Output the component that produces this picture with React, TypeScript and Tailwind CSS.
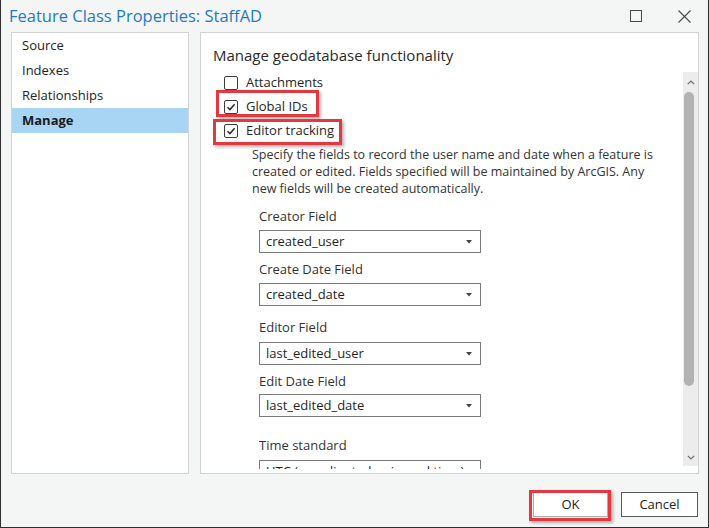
import React from "react";

function CheckBox({ checked }: { checked: boolean }) {
  return (
    <div className="w-[14px] h-[14px] border border-[#3c3c3c] rounded-[2px] bg-white flex items-center justify-center shrink-0">
      {checked && (
        <svg width="10" height="10" viewBox="0 0 10 10">
          <path d="M1.5 5.2 L4 7.6 L8.6 2.2" fill="none" stroke="#2b2b2b" strokeWidth="1.5" />
        </svg>
      )}
    </div>
  );
}

function Dropdown({ value, mt }: { value: string; mt: string }) {
  return (
    <div className={`${mt} w-[222px] h-[23px] border border-[#7a7a7a] bg-white flex items-center pl-[6px] pr-[8px] shrink-0 overflow-hidden`}>
      <span className="text-[13px] text-[#1f1f1f] leading-none whitespace-nowrap">{value}</span>
      <svg className="ml-auto shrink-0" width="6" height="4" viewBox="0 0 6 4">
        <path d="M0 0 H6 L3 3.5 Z" fill="#444" />
      </svg>
    </div>
  );
}

export default function App() {
  return (
    <div className="w-[709px] h-[528px] bg-[#f4f6f5] border-x border-b border-[#2e2e2e] flex flex-col overflow-hidden font-['Open_Sans',sans-serif] text-[#262626]">
      {/* Title bar */}
      <div className="h-[32px] flex items-center pl-[8px] pr-[17px] shrink-0">
        <span className="text-[16.5px] text-[#1f7ac4] leading-none">Feature Class Properties: StaffAD</span>
        <div className="ml-auto flex items-center gap-[36px]">
          <svg width="12" height="12" viewBox="0 0 12 12">
            <rect x="0.5" y="0.5" width="11" height="11" fill="none" stroke="#4a4a4a" strokeWidth="1" />
          </svg>
          <svg width="13" height="13" viewBox="0 0 13 13">
            <path d="M0.5 0.5 L12.5 12.5 M12.5 0.5 L0.5 12.5" fill="none" stroke="#4a4a4a" strokeWidth="1.1" />
          </svg>
        </div>
      </div>

      {/* Body */}
      <div className="flex h-[442px] pl-[10px] pr-[9px] gap-[11px] shrink-0">
        {/* Left nav */}
        <div className="w-[178px] border border-[#d2d2d2] bg-white flex flex-col text-[13px] text-[#222]">
          <div className="h-[25px] flex items-center pl-[10px]">Source</div>
          <div className="h-[25px] flex items-center pl-[10px]">Indexes</div>
          <div className="h-[25px] flex items-center pl-[10px]">Relationships</div>
          <div className="h-[25px] flex items-center pl-[10px] bg-[#a8d5f3] font-bold text-[#1a1a1a]">Manage</div>
        </div>

        {/* Right panel */}
        <div className="flex-1 border border-[#d2d2d2] bg-white flex flex-col min-w-0">
          <div className="pl-[12px] pt-[12px] h-[31px] text-[15px] leading-[20px] text-[#2a2a2a] shrink-0 whitespace-nowrap">
            Manage geodatabase functionality
          </div>
          <div className="flex flex-1 min-h-0">
            <div className="flex-1 min-w-0 overflow-hidden mb-[4px] pl-[23px] pt-[7px] flex flex-col">
              <div className="h-[24px] flex items-center gap-[8px] text-[13px] shrink-0">
                <CheckBox checked={false} />
                <span>Attachments</span>
              </div>
              <div className="h-[24px] flex items-center shrink-0">
                <div className="relative h-[24px] flex items-center gap-[8px] text-[13px]">
                  <CheckBox checked />
                  <span>Global IDs</span>
                  <span className="absolute left-[-8px] top-[-5px] w-[103px] h-[27px] border-[3px] border-[#e5383e] shadow-[2px_2px_3px_rgba(0,0,0,0.3)]"></span>
                </div>
              </div>
              <div className="h-[24px] flex items-center shrink-0">
                <div className="relative h-[24px] flex items-center gap-[8px] text-[13px]">
                  <CheckBox checked />
                  <span>Editor tracking</span>
                  <span className="absolute left-[-11px] top-[0px] w-[129px] h-[26px] border-[3px] border-[#e5383e] shadow-[2px_2px_3px_rgba(0,0,0,0.3)]"></span>
                </div>
              </div>
              <p className="mt-[3px] ml-[28px] w-[402px] text-[12.5px] leading-[17px] text-[#333] shrink-0">
                Specify the fields to record the user name and date when a feature is created or edited. Fields specified will be maintained by ArcGIS. Any new fields will be created automatically.
              </p>
              <div className="ml-[35px] flex flex-col">
                <div className="mt-[9px] h-[20px] leading-[20px] text-[13px] text-[#333]">Creator Field</div>
                <Dropdown value="created_user" mt="mt-[4px]" />
                <div className="mt-[6px] h-[20px] leading-[20px] text-[13px] text-[#333]">Create Date Field</div>
                <Dropdown value="created_date" mt="mt-[4px]" />
                <div className="mt-[11px] h-[20px] leading-[20px] text-[13px] text-[#333]">Editor Field</div>
                <Dropdown value="last_edited_user" mt="mt-[5px]" />
                <div className="mt-[6px] h-[20px] leading-[20px] text-[13px] text-[#333]">Edit Date Field</div>
                <Dropdown value="last_edited_date" mt="mt-[3px]" />
                <div className="mt-[18px] h-[20px] leading-[20px] text-[13px] text-[#333]">Time standard</div>
                <Dropdown value="UTC (coordinated universal time)" mt="mt-[5px]" />
              </div>
            </div>
            {/* Scrollbar */}
            <div className="w-[15px] mt-[8px] mb-[7px] bg-[#ececec] flex flex-col shrink-0">
              <div className="h-[20px] flex items-center justify-center">
                <svg width="8" height="5" viewBox="0 0 8 5">
                  <path d="M0.8 4.2 L4 1 L7.2 4.2" fill="none" stroke="#6a6a6a" strokeWidth="1.2" />
                </svg>
              </div>
              <div className="ml-[1px] w-[10px] h-[294px] rounded-full bg-[#b2b2b2]"></div>
              <div className="flex-1"></div>
              <div className="h-[18px] flex items-center justify-center">
                <svg width="8" height="5" viewBox="0 0 8 5">
                  <path d="M0.8 0.8 L4 4 L7.2 0.8" fill="none" stroke="#6a6a6a" strokeWidth="1.2" />
                </svg>
              </div>
            </div>
          </div>
        </div>
      </div>

      {/* Footer */}
      <div className="flex-1 flex justify-end items-start pt-[18px] pr-[10px] gap-[13px] text-[13px]">
        <button className="relative w-[75px] h-[25px] bg-white border border-[#adadad] text-[#222]">
          OK
          <span className="absolute left-[-5px] top-[-3px] w-[82px] h-[31px] border-[3px] border-[#e5383e] shadow-[2px_2px_3px_rgba(0,0,0,0.3)]"></span>
        </button>
        <button className="w-[77px] h-[25px] bg-white border border-[#5a5a5a] text-[#222]">Cancel</button>
      </div>
    </div>
  );
}
